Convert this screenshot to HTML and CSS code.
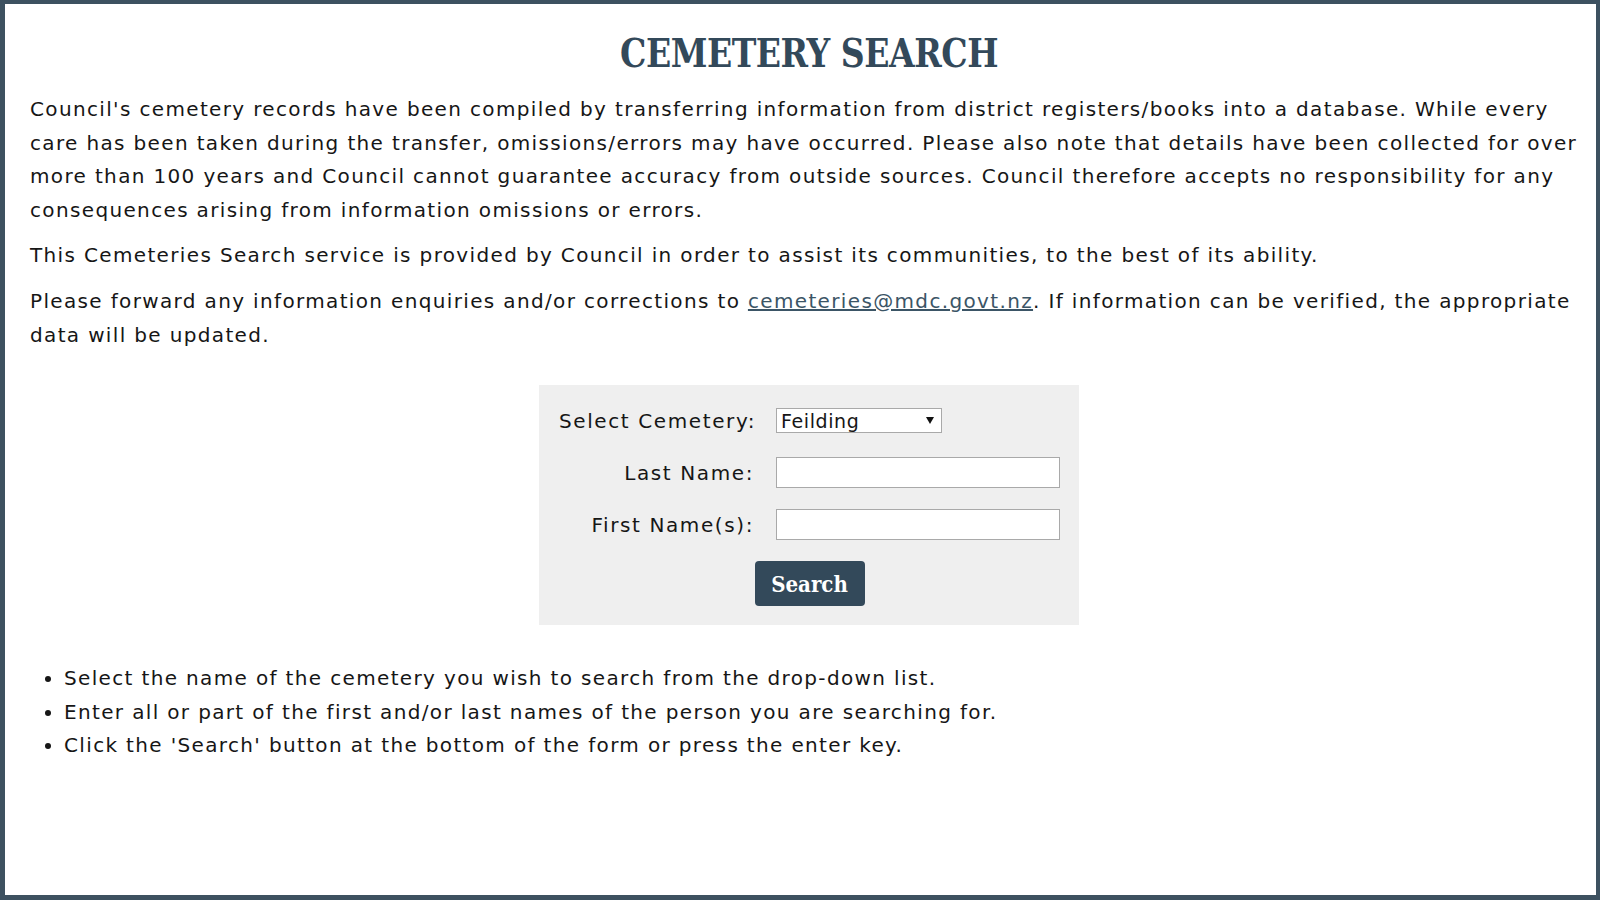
FILE: index.html
```html
<!DOCTYPE html>
<html lang="en">
<head>
<meta charset="utf-8">
<title>Cemetery Search</title>
<link rel="stylesheet" href="styles.css">
</head>
<body>
<div class="frame">
  <main class="content">
    <h1 class="title">CEMETERY SEARCH</h1>
    <p class="para">Council's cemetery records have been compiled by transferring information from district registers/books into a database. While every care has been taken during the transfer, omissions/errors may have occurred. Please also note that details have been collected for over more than 100 years and Council cannot guarantee accuracy from outside sources. Council therefore accepts no responsibility for any consequences arising from information omissions or errors.</p>
    <p class="para">This Cemeteries Search service is provided by Council in order to assist its communities, to the best of its ability.</p>
    <p class="para">Please forward any information enquiries and/or corrections to <a class="mail" href="#">cemeteries@mdc.govt.nz</a>. If information can be verified, the appropriate data will be updated.</p>

    <form class="panel">
      <div class="row">
        <label class="lbl" for="cem">Select Cemetery:</label>
        <div class="select-wrap">
          <select id="cem" class="select"><option>Feilding</option></select>
          <span class="arrow"></span>
        </div>
      </div>
      <div class="row">
        <label class="lbl" for="ln">Last Name:</label>
        <input id="ln" class="txt" type="text">
      </div>
      <div class="row">
        <label class="lbl" for="fn">First Name(s):</label>
        <input id="fn" class="txt" type="text">
      </div>
      <div class="btn-row">
        <button class="btn" type="button">Search</button>
      </div>
    </form>

    <ul class="tips">
      <li>Select the name of the cemetery you wish to search from the drop-down list.</li>
      <li>Enter all or part of the first and/or last names of the person you are searching for.</li>
      <li>Click the 'Search' button at the bottom of the form or press the enter key.</li>
    </ul>
  </main>
</div>
</body>
</html>
```

FILE: styles.css
```css
html, body {
  margin: 0;
  padding: 0;
}
body {
  background: #3d5160;
  font-family: "DejaVu Sans", Verdana, sans-serif;
  color: #161616;
}
.frame {
  box-sizing: border-box;
  width: 1600px;
  height: 900px;
  border-style: solid;
  border-color: #3d5160;
  border-width: 4px 4px 5px 5px;
  background: #fff;
  overflow: hidden;
}
.content {
  padding: 0 8px 0 25px;
}
.title {
  margin: 25px 0 0 0;
  font-family: "DejaVu Serif", Georgia, serif;
  font-stretch: condensed;
  font-weight: bold;
  font-size: 40px;
  line-height: 48px;
  letter-spacing: -0.5px;
  color: #33495a;
  text-align: center;
  transform: scaleX(0.92);
}
.para {
  margin: 16px 0 0 0;
  font-size: 20px;
  letter-spacing: 1.35px;
  line-height: 33.6px;
}
.para + .para {
  margin-top: 12px;
}
.mail {
  color: #3b5566;
  text-decoration: underline;
}
.panel {
  width: 540px;
  box-sizing: border-box;
  margin: 33px auto 0;
  padding: 20px 19px 19px 20px;
  background: #efefef;
  display: flex;
  flex-direction: column;
  gap: 21px;
}
.row {
  display: grid;
  grid-template-columns: 195px 1fr;
  column-gap: 22px;
  align-items: center;
  height: 31px;
}
.lbl {
  font-size: 20px;
  letter-spacing: 1.6px;
  text-align: right;
  white-space: nowrap;
}
.select-wrap {
  position: relative;
  width: 166px;
  height: 25px;
}
.select {
  appearance: none;
  -webkit-appearance: none;
  box-sizing: border-box;
  width: 166px;
  height: 25px;
  margin: 0;
  padding: 0 0 0 4px;
  border: 1px solid #a9a9a9;
  border-radius: 0;
  background: #fff;
  font-family: "DejaVu Sans", Verdana, sans-serif;
  font-size: 19px;
  letter-spacing: 0.6px;
  color: #161616;
}
.arrow {
  position: absolute;
  right: 8px;
  top: 9px;
  width: 0;
  height: 0;
  border-left: 4px solid transparent;
  border-right: 4px solid transparent;
  border-top: 7px solid #111;
  pointer-events: none;
}
.txt {
  box-sizing: border-box;
  width: 284px;
  height: 31px;
  margin: 0;
  border: 1px solid #a9a9a9;
  background: #fff;
}
.btn-row {
  display: flex;
  justify-content: center;
}
.btn {
  width: 110px;
  height: 45px;
  border: 0;
  border-radius: 4px;
  background: #33495a;
  color: #fff;
  font-family: "DejaVu Serif", Georgia, serif;
  font-stretch: condensed;
  font-weight: bold;
  font-size: 22px;
  padding: 0;
}
.tips {
  margin: 37px 0 0 0;
  padding-left: 34px;
  font-size: 20px;
  letter-spacing: 1.35px;
  line-height: 33.6px;
}
.tips li::marker {
  letter-spacing: 4px;
}
```
